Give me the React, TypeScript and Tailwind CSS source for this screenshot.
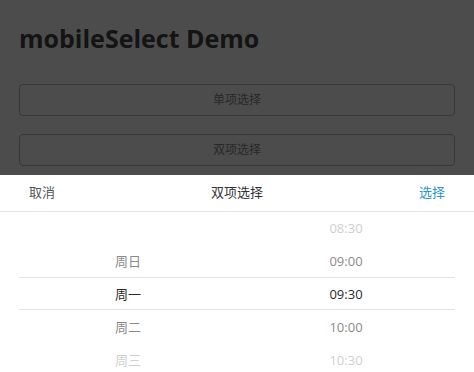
import React from "react";

const font = { fontFamily: '"Open Sans","Noto Sans CJK SC",sans-serif' };

const col1 = [
  { t: "", c: "text-[#d0d0d0]" },
  { t: "周日", c: "text-[#8a8a8a]" },
  { t: "周一", c: "text-[#2a2a2a]" },
  { t: "周二", c: "text-[#8a8a8a]" },
  { t: "周三", c: "text-[#cfcfcf]" },
];
const col2 = [
  { t: "08:30", c: "text-[#cfcfcf]" },
  { t: "09:00", c: "text-[#8a8a8a]" },
  { t: "09:30", c: "text-[#2a2a2a]" },
  { t: "10:00", c: "text-[#8a8a8a]" },
  { t: "10:30", c: "text-[#cfcfcf]" },
];

function Col({ items }: { items: { t: string; c: string }[] }) {
  return (
    <div className="flex flex-1 flex-col">
      {items.map((it, i) => (
        <div key={i} className={`flex h-[33px] items-center justify-center text-[13px] ${it.c}`}>
          {it.t}
        </div>
      ))}
    </div>
  );
}

export default function App() {
  return (
    <div className="relative h-[372px] w-[474px] overflow-hidden bg-white" style={font}>
      <div className="flex flex-col px-[19px]">
        <h1 className="mt-[21px] h-[34px] text-[25px] font-bold leading-[34px] text-[#444]">mobileSelect Demo</h1>
        <div className="mt-[29px] flex flex-col gap-[18px]">
          <div className="flex h-[32px] items-center justify-center rounded-[4px] border border-[#bdbdbd] text-[12px] text-[#888]">单项选择</div>
          <div className="flex h-[32px] items-center justify-center rounded-[4px] border border-[#bdbdbd] text-[12px] text-[#888]">双项选择</div>
        </div>
      </div>
      <div className="absolute inset-0 bg-black/70" />
      <div className="absolute left-0 right-0 top-[175px] bg-white">
        <div className="flex h-[37px] items-center justify-between border-b border-[#e6e6e6] px-[29px] text-[13px]">
          <span className="text-[#555]">取消</span>
          <span className="text-[#333]">双项选择</span>
          <span className="text-[#2f93d1]">选择</span>
        </div>
        <div className="relative mx-[19px] flex">
          <Col items={col1} />
          <Col items={col2} />
          <div className="absolute left-0 right-0 top-[65px] h-[33px] border-y border-[#e3e3e3]" />
        </div>
      </div>
    </div>
  );
}
